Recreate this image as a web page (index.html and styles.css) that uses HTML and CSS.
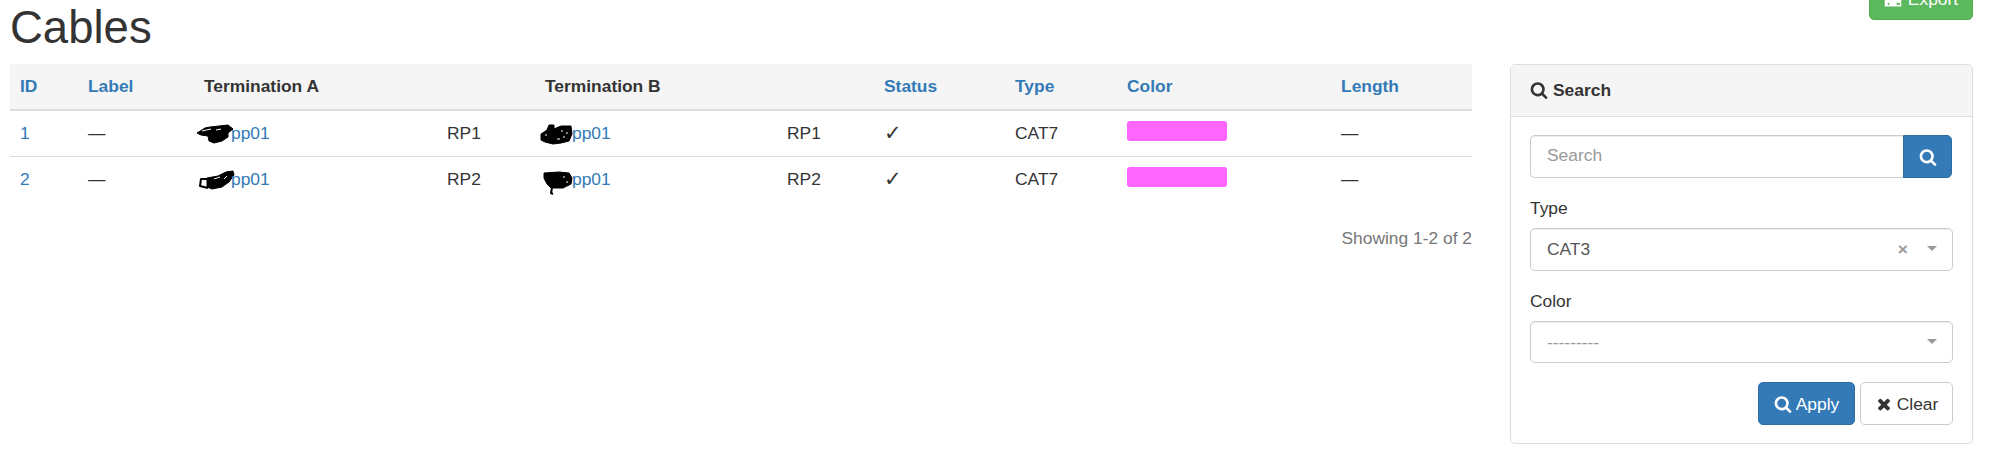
FILE: index.html
```html
<!DOCTYPE html>
<html lang="en">
<head>
    <meta charset="UTF-8">
    <title>Cables</title>
    <link rel="stylesheet" href="styles.css">
</head>
<body>
<svg class="defs">
    <defs>
        <symbol id="i-search" viewBox="0 0 1792 1792"><path d="M1216 832q0-185-131.5-316.5t-316.5-131.5-316.5 131.5-131.5 316.5 131.5 316.5 316.5 131.5 316.5-131.5 131.5-316.5zm512 832q0 52-38 90t-90 38q-54 0-90-38l-343-342q-179 124-399 124-143 0-273.5-55.5t-225-150-150-225-55.5-273.5 55.5-273.5 150-225 225-150 273.5-55.5 273.5 55.5 225 150 150 225 55.5 273.5q0 220-124 399l343 343q37 37 37 90z"/></symbol>
        <symbol id="i-times" viewBox="0 0 1792 1792"><path d="M1490 1322q0 40-28 68l-136 136q-28 28-68 28t-68-28l-294-294-294 294q-28 28-68 28t-68-28l-136-136q-28-28-28-68t28-68l294-294-294-294q-28-28-28-68t28-68l136-136q28-28 68-28t68 28l294 294 294-294q28-28 68-28t68 28l136 136q28 28 28 68t-28 68l-294 294 294 294q28 28 28 68z"/></symbol>
    </defs>
</svg>

<div class="page">
    <div class="page-head">
        <h1>Cables</h1>
        <a class="btn btn-success btn-export">
            <svg class="export-icon" viewBox="0 0 24 20"><path d="M1 0h22v20H1zM5 15v3h2v-3zm12 0v3h4v-3z"/></svg>
            Export
        </a>
    </div>

    <div class="columns">
        <div class="results">
            <table class="table">
                <colgroup>
                    <col class="c-id"><col class="c-label"><col class="c-name"><col class="c-port"><col class="c-name-b"><col class="c-port-b"><col class="c-status"><col class="c-type"><col class="c-color"><col class="c-length">
                </colgroup>
                <thead>
                    <tr>
                        <th><a>ID</a></th>
                        <th><a>Label</a></th>
                        <th colspan="2">Termination A</th>
                        <th colspan="2">Termination B</th>
                        <th><a>Status</a></th>
                        <th><a>Type</a></th>
                        <th><a>Color</a></th>
                        <th><a>Length</a></th>
                    </tr>
                </thead>
                <tbody>
                    <tr>
                        <td><a>1</a></td>
                        <td>—</td>
                        <td><a><svg class="scribble" viewBox="0 0 36 20"><path class="ink" d="M-1 9L7 4L12 3L30 1L35 5L30 9L30 13L24 17L16 19L11 17L10 12L3 11z"/><path class="slit" d="M4 7l9 -2M18 6l5 -1"/></svg>pp01</a></td>
                        <td>RP1</td>
                        <td><a><svg class="scribble" viewBox="0 0 36 20"><path class="ink" d="M2 10L8 6L10 1L15 1L15 5L22 2L32 2L33 10L30 17L22 19L14 20L6 18L2 16z"/><path class="slit" d="M22 7h2M27 9h2M24 13h2M18 15h3M6 11h2"/></svg>pp01</a></td>
                        <td>RP1</td>
                        <td class="status">✓</td>
                        <td>CAT7</td>
                        <td><span class="swatch"></span></td>
                        <td>—</td>
                    </tr>
                    <tr>
                        <td><a>2</a></td>
                        <td>—</td>
                        <td><a><svg class="scribble" viewBox="0 0 36 20"><path class="ink" d="M9 8L20 6L28 2L35 1L36 5L31 12L24 17L14 19L9 17z"/><path class="loop" d="M10 9H3L2 16L10 18"/><path class="slit" d="M16 9l6 -2M26 9l3 -3"/></svg>pp01</a></td>
                        <td>RP2</td>
                        <td><a><svg class="scribble" viewBox="0 0 36 20"><path class="ink" d="M5 3L20 2L30 3L33 8L32 14L24 18L12 18L8 14L5 8z"/><path class="loop" d="M13 18l-1 5l2 1"/><path class="slit" d="M24 7h2M27 12h2"/></svg>pp01</a></td>
                        <td>RP2</td>
                        <td class="status">✓</td>
                        <td>CAT7</td>
                        <td><span class="swatch"></span></td>
                        <td>—</td>
                    </tr>
                </tbody>
            </table>
            <div class="showing">Showing 1-2 of 2</div>
        </div>

        <div class="panel">
            <div class="panel-heading">
                <svg class="icon"><use href="#i-search"/></svg>
                <strong>Search</strong>
            </div>
            <div class="panel-body">
                <div class="form-group input-group">
                    <div class="form-control search-input placeholder">Search</div>
                    <span class="btn btn-primary btn-addon"><svg class="icon"><use href="#i-search"/></svg></span>
                </div>
                <div class="form-group">
                    <label>Type</label>
                    <div class="form-control select">
                        <span class="select-value">CAT3</span>
                        <span class="select-clear">×</span>
                        <span class="select-arrow"></span>
                    </div>
                </div>
                <div class="form-group">
                    <label>Color</label>
                    <div class="form-control select select-color">
                        <span class="select-value placeholder">---------</span>
                        <span class="select-arrow"></span>
                    </div>
                </div>
                <div class="actions">
                    <span class="btn btn-primary"><svg class="icon"><use href="#i-search"/></svg> Apply</span>
                    <span class="btn btn-default"><svg class="icon"><use href="#i-times"/></svg> Clear</span>
                </div>
            </div>
        </div>
    </div>
</div>
</body>
</html>
```

FILE: styles.css
```css
body {
    font-family: "Liberation Sans", Arial, sans-serif;
    font-size: 17.4px;
    line-height: 24px;
    margin: 0;
    padding: 0;
    background-color: #fff;
    color: #333;
    overflow: hidden;
}

a {
    color: #337ab7;
}

.defs {
    display: none;
}

.page {
    padding: 0 18px 0 10px;
}

.page-head {
    display: flex;
    justify-content: space-between;
    align-items: flex-start;
    height: 64px;
}

h1 {
    margin: 0;
    padding-top: 3px;
    font-size: 45.5px;
    font-weight: 400;
    line-height: 50px;
}

.columns {
    display: flex;
    gap: 38px;
    align-items: flex-start;
}

.results {
    width: 1462px;
    flex: none;
}

.table {
    width: 100%;
    table-layout: fixed;
    border-collapse: collapse;
}

.c-id { width: 68px; }
.c-label { width: 116px; }
.c-name { width: 243px; }
.c-port { width: 98px; }
.c-name-b { width: 242px; }
.c-port-b { width: 97px; }
.c-status { width: 131px; }
.c-type { width: 112px; }
.c-color { width: 214px; }
.c-length { width: 141px; }

.table th {
    height: 43px;
    padding: 0 10px 2px;
    text-align: left;
    background-color: #f5f5f5;
    border-bottom: 2px solid #ddd;
}

.table td {
    height: 43px;
    padding: 0 10px 2px;
    border-bottom: 1px solid #ddd;
    vertical-align: middle;
}

.table tbody tr:last-child td {
    border-bottom: none;
}

.scribble {
    width: 36px;
    height: 20px;
    margin: 0 -3px 0 -6px;
    vertical-align: -5px;
    overflow: visible;
}

.ink {
    fill: #000;
    stroke: #000;
    stroke-linejoin: round;
}

.loop {
    fill: none;
    stroke: #000;
    stroke-width: 2;
    stroke-linejoin: round;
}

.slit {
    fill: none;
    stroke: #fff;
}

.table .status {
    font-family: "DejaVu Sans", sans-serif;
    font-size: 21px;
    font-weight: 700;
}

.swatch {
    display: block;
    width: 100px;
    height: 20px;
    margin-top: -4px;
    background-color: #f6f;
    border-radius: 3px;
}

.showing {
    margin-top: 24px;
    text-align: right;
    color: #777;
}

.panel {
    flex: none;
    width: 463px;
    box-sizing: border-box;
    border: 1px solid #ddd;
    border-radius: 5px;
    box-shadow: 0 1px 1px rgba(0, 0, 0, 0.05);
}

.panel-heading {
    box-sizing: border-box;
    height: 52px;
    padding: 0 19px 2px;
    display: flex;
    align-items: center;
    gap: 5px;
    background-color: #f5f5f5;
    border-bottom: 1px solid #ddd;
    border-radius: 4px 4px 0 0;
}

.panel-body {
    padding: 18px 19px 18px;
}

.icon {
    width: 18px;
    height: 18px;
    fill: currentColor;
    vertical-align: -2px;
}

.form-group {
    margin-bottom: 19px;
}

.form-group label {
    display: block;
    margin-bottom: 9px;
    line-height: 22px;
}

.form-control {
    box-sizing: border-box;
    height: 43px;
    padding: 0 16px 2px;
    display: flex;
    align-items: center;
    border: 1px solid #ccc;
    border-radius: 5px;
    color: #555;
    box-shadow: inset 0 1px 1px rgba(0, 0, 0, 0.075);
}

.placeholder {
    color: #999;
}

.input-group {
    display: flex;
    margin-right: 1px;
}

.input-group .form-control {
    flex: 1;
    border-radius: 5px 0 0 5px;
    border-right: none;
}

.search-input {
    padding-bottom: 4px;
}

.btn {
    box-sizing: border-box;
    display: inline-flex;
    align-items: center;
    justify-content: center;
    gap: 4px;
    height: 43px;
    border: 1px solid transparent;
    border-radius: 5px;
}

.btn-primary {
    width: 97px;
    background-color: #337ab7;
    border-color: #2e6da4;
    color: #fff;
}

.btn-default {
    width: 93px;
    background-color: #fff;
    border-color: #ccc;
    color: #333;
}

.btn-success {
    background-color: #5cb85c;
    border-color: #4cae4c;
    color: #fff;
}

.btn-export {
    width: 104px;
    margin-top: -23px;
    gap: 6px;
}

.export-icon {
    width: 18px;
    height: 16px;
    fill: #fff;
}

.btn-addon {
    width: 49px;
    border-radius: 0 5px 5px 0;
}

.select {
    gap: 0;
}

.select-color {
    height: 42px;
}

.select-value {
    flex: 1;
}

.select-value.placeholder {
    margin-top: 2px;
}

.select-clear {
    margin-right: 19px;
    font-weight: 700;
    color: #999;
}

.select-arrow {
    width: 0;
    height: 0;
    margin-right: -1px;
    border-style: solid;
    border-width: 5px 5px 0 5px;
    border-color: #999 transparent transparent transparent;
}

.actions {
    display: flex;
    justify-content: flex-end;
    gap: 5px;
}
```
